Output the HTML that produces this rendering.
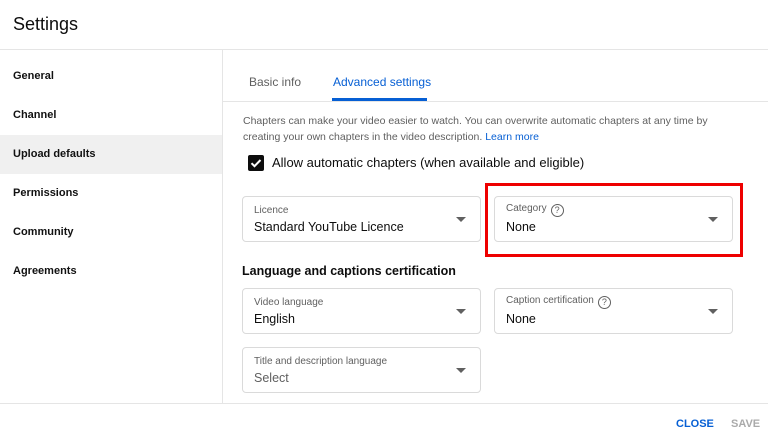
<!DOCTYPE html>
<html><head><style>
*{box-sizing:border-box;margin:0;padding:0}
body{width:768px;height:438px;overflow:hidden;background:#fff;font-family:"Liberation Sans",Roboto,sans-serif;color:#0d0d0d;position:relative}
.abs{position:absolute}
.hdr{left:13px;top:14px;font-size:18px;color:#0d0d0d}
.hline{left:0;top:49px;width:768px;height:1px;background:#e5e5e5}
.vline{left:222px;top:50px;width:1px;height:353px;background:#e5e5e5}
.nav{left:0;width:222px;height:39px;font-size:11px;font-weight:bold;padding-left:13px;line-height:39px;color:#111}
.sel{background:#f0f0f0}
.tab{top:75px;font-size:12px}
.tabline{left:223px;top:101px;width:545px;height:1px;background:#e5e5e5}
.field{border:1px solid #dadada;border-radius:4px;width:239px;height:46px}
.lbl{position:absolute;left:11px;top:8px;font-size:10px;color:#606060}
.val{position:absolute;left:11px;top:23px;font-size:12.5px;color:#0d0d0d}
.arr{position:absolute;right:14px;top:20px;width:0;height:0;border-left:5px solid transparent;border-right:5px solid transparent;border-top:5px solid #606060}
.q{display:inline-block;width:13px;height:13px;border:1.3px solid #606060;border-radius:50%;font-size:9px;text-align:center;line-height:11px;margin-left:4px;vertical-align:-2px;color:#606060}
</style></head><body>
<div class="abs hdr">Settings</div>
<div class="abs hline"></div>
<div class="abs vline"></div>
<div class="abs nav" style="top:57px">General</div>
<div class="abs nav" style="top:96px">Channel</div>
<div class="abs nav sel" style="top:135px">Upload defaults</div>
<div class="abs nav" style="top:174px">Permissions</div>
<div class="abs nav" style="top:213px">Community</div>
<div class="abs nav" style="top:252px">Agreements</div>

<div class="abs tab" style="left:249px;color:#606060">Basic info</div>
<div class="abs tab" style="left:333px;color:#065fd4">Advanced settings</div>
<div class="abs" style="left:332px;top:98px;width:95px;height:3px;background:#065fd4"></div>
<div class="abs tabline"></div>

<div class="abs" style="left:243px;top:113px;width:500px;font-size:10.5px;line-height:16px;color:#606060">Chapters can make your video easier to watch. You can overwrite automatic chapters at any time by creating your own chapters in the video description. <span style="color:#065fd4">Learn more</span></div>
<div class="abs" style="left:248px;top:155px;width:16px;height:16px;background:#0d0d0d;border-radius:2px"><svg width="16" height="16" viewBox="0 0 16 16"><path d="M3.5 8.2l3 3 6-6.2" stroke="#fff" stroke-width="2" fill="none"/></svg></div>
<div class="abs" style="left:272px;top:155px;font-size:13px">Allow automatic chapters (when available and eligible)</div>

<div class="abs field" style="left:242px;top:196px"><div class="lbl">Licence</div><div class="val">Standard YouTube Licence</div><div class="arr"></div></div>
<div class="abs field" style="left:494px;top:196px"><div class="lbl" style="top:6px">Category<span class="q">?</span></div><div class="val">None</div><div class="arr"></div></div>
<div class="abs" style="left:485px;top:183px;width:258px;height:74px;border:3px solid #ee0000"></div>

<div class="abs" style="left:242px;top:264px;font-size:12.5px;font-weight:bold">Language and captions certification</div>
<div class="abs field" style="left:242px;top:288px"><div class="lbl">Video language</div><div class="val">English</div><div class="arr"></div></div>
<div class="abs field" style="left:494px;top:288px"><div class="lbl" style="top:6px">Caption certification<span class="q">?</span></div><div class="val">None</div><div class="arr"></div></div>
<div class="abs field" style="left:242px;top:347px"><div class="lbl">Title and description language</div><div class="val" style="color:#606060">Select</div><div class="arr"></div></div>

<div class="abs" style="left:0;top:403px;width:768px;height:1px;background:#e5e5e5"></div>
<div class="abs" style="left:676px;top:418px;font-size:11px;font-weight:bold;color:#065fd4">CLOSE</div>
<div class="abs" style="left:731px;top:418px;font-size:11px;font-weight:bold;color:#aaa">SAVE</div>
</body></html>
